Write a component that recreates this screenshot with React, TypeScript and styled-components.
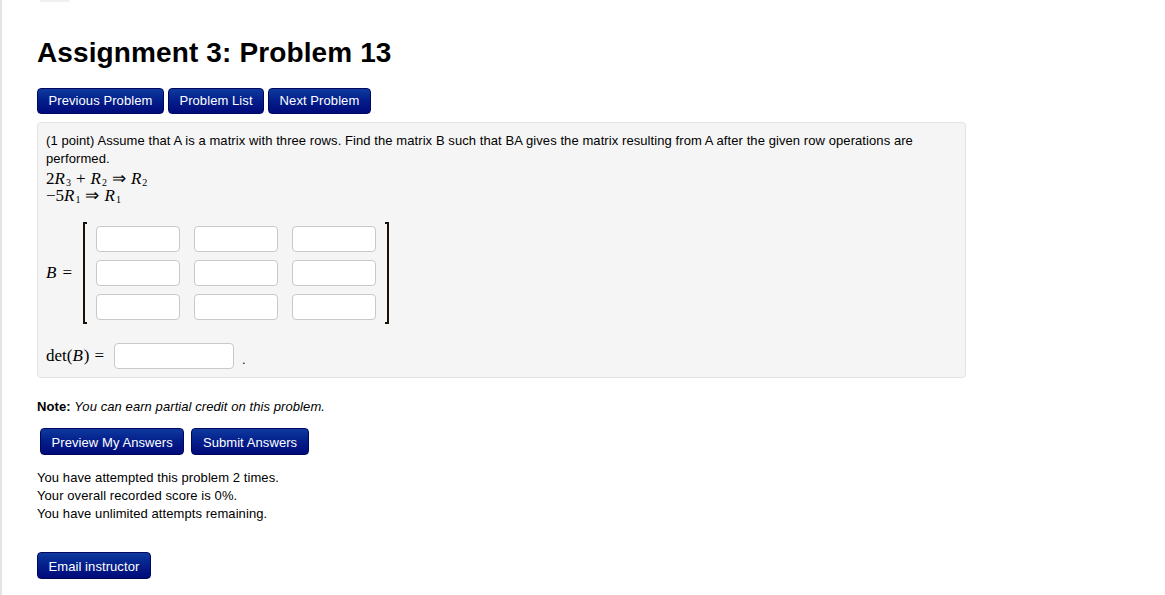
import React from "react";
import styled, { createGlobalStyle } from "styled-components";

const GlobalStyle = createGlobalStyle`
  html, body { margin: 0; padding: 0; background: #fff; }
  body {
    font-family: "Liberation Sans", Arial, Helvetica, sans-serif;
    font-size: 13px;
    line-height: 18px;
    letter-spacing: 0.08px;
    color: #000;
  }
  * { box-sizing: border-box; }
`;

const Page = styled.div`
  min-height: 595px;
  border-left: 2px solid #e4e4e4;
  padding-left: 35px;
  overflow: hidden;
`;

const TopStub = styled.div`
  width: 30px;
  height: 2px;
  margin-left: 3px;
  background: #f0f0f0;
  border-radius: 0 0 6px 6px;
`;

const Title = styled.h1`
  margin: 35px 0 20px 0;
  font-size: 28px;
  line-height: 31px;
  font-weight: bold;
  letter-spacing: 0.12px;
`;

const ButtonRow = styled.div<{ $gap: number; $indent?: number }>`
  display: flex;
  gap: ${(p) => p.$gap}px;
  padding-left: ${(p) => p.$indent ?? 0}px;
`;

const NavButton = styled.button<{ $tall?: boolean }>`
  font-family: "Liberation Sans", Arial, Helvetica, sans-serif;
  font-size: 13px;
  letter-spacing: 0.08px;
  line-height: ${(p) => (p.$tall ? 17 : 18)}px;
  color: #fff;
  padding: ${(p) => (p.$tall ? "5px 10.5px 3px" : "3px 10.5px")};
  border: 1px solid #00075e;
  border-radius: 4px;
  background: linear-gradient(to bottom, #0e3a9e 0%, #04208c 45%, #000a7a 100%);
  cursor: pointer;
  white-space: nowrap;
`;

const ProblemBox = styled.div`
  margin-top: 8px;
  width: 929px;
  padding: 9px 8px 8px;
  background: #f5f5f5;
  border: 1px solid #e3e3e3;
  border-radius: 4px;
`;

const Para = styled.div``;

const MathLine = styled.div<{ $top?: number }>`
  font-family: "Liberation Serif", "Times New Roman", serif;
  font-size: 17px;
  line-height: 17px;
  height: 17px;
  letter-spacing: 0;
  margin-top: ${(p) => p.$top ?? 0}px;
  white-space: nowrap;
`;

const Mi = styled.span`
  font-style: italic;
  padding-right: 1px;
`;

const Sub = styled.span`
  font-size: 10px;
  line-height: 10px;
  vertical-align: -2px;
  font-style: normal;
`;

const Mo = styled.span`
  padding: 0 5px;
`;

const MatrixRow = styled.div`
  display: flex;
  align-items: center;
  margin-top: 18px;
`;

const MathLabel = styled.span<{ $width: number }>`
  font-family: "Liberation Serif", "Times New Roman", serif;
  font-size: 17px;
  letter-spacing: 0;
  width: ${(p) => p.$width}px;
  white-space: nowrap;
  flex: none;
`;

const Bracket = styled.div<{ $side: "left" | "right" }>`
  width: 4px;
  height: 102px;
  flex: none;
  border-top: 2px solid #1a1208;
  border-bottom: 2px solid #1a1208;
  ${(p) => (p.$side === "left" ? "border-left" : "border-right")}: 2px solid #1a1208;
`;

const MatrixGrid = styled.div`
  display: grid;
  grid-template-columns: repeat(3, 84px);
  column-gap: 14px;
  row-gap: 8px;
  padding: 0 9px;
`;

const AnswerInput = styled.input<{ $width: number }>`
  width: ${(p) => p.$width}px;
  height: 26px;
  margin: 0;
  padding: 2px 6px;
  background: #fff;
  border: 1px solid #c9c9c9;
  border-radius: 4px;
  font-family: "Liberation Sans", Arial, sans-serif;
  font-size: 13px;
  outline: none;
`;

const DetRow = styled.div`
  display: flex;
  align-items: center;
  margin-top: 19px;
`;

const Period = styled.span`
  margin-left: 8px;
  padding-top: 8px;
  font-size: 13px;
`;

const Note = styled.div`
  margin-top: 20px;
  margin-bottom: 12px;
  em { font-style: italic; }
`;

const Attempts = styled.div`
  margin-top: 14px;
  margin-bottom: 29px;
`;

const cells = Array.from({ length: 9 }, (_, i) => i);

export default function App() {
  return (
    <>
      <GlobalStyle />
      <Page>
        <TopStub />
        <Title>Assignment 3: Problem 13</Title>
        <ButtonRow $gap={4}>
          <NavButton>Previous Problem</NavButton>
          <NavButton>Problem List</NavButton>
          <NavButton>Next Problem</NavButton>
        </ButtonRow>

        <ProblemBox>
          <Para>
            (1 point) Assume that A is a matrix with three rows. Find the matrix B such that BA gives the
            matrix resulting from A after the given row operations are performed.
          </Para>
          <MathLine $top={2}>
            2<Mi>R</Mi>
            <Sub>3</Sub>
            <Mo>+</Mo>
            <Mi>R</Mi>
            <Sub>2</Sub>
            <Mo>⇒</Mo>
            <Mi>R</Mi>
            <Sub>2</Sub>
          </MathLine>
          <MathLine>
            −5<Mi>R</Mi>
            <Sub>1</Sub>
            <Mo>⇒</Mo>
            <Mi>R</Mi>
            <Sub>1</Sub>
          </MathLine>

          <MatrixRow>
            <MathLabel $width={37}>
              <Mi>B</Mi>
              <Mo>=</Mo>
            </MathLabel>
            <Bracket $side="left" />
            <MatrixGrid>
              {cells.map((i) => (
                <AnswerInput key={i} $width={84} type="text" aria-label={`B entry ${i + 1}`} />
              ))}
            </MatrixGrid>
            <Bracket $side="right" />
          </MatrixRow>

          <DetRow>
            <MathLabel $width={68}>
              det(<Mi>B</Mi>)<Mo>=</Mo>
            </MathLabel>
            <AnswerInput $width={120} type="text" aria-label="det(B)" />
            <Period>.</Period>
          </DetRow>
        </ProblemBox>

        <Note>
          <b>Note:</b> <em>You can earn partial credit on this problem.</em>
        </Note>

        <ButtonRow $gap={7} $indent={3}>
          <NavButton $tall>Preview My Answers</NavButton>
          <NavButton $tall>Submit Answers</NavButton>
        </ButtonRow>

        <Attempts>
          You have attempted this problem 2 times.
          <br />
          Your overall recorded score is 0%.
          <br />
          You have unlimited attempts remaining.
        </Attempts>

        <NavButton $tall>Email instructor</NavButton>
      </Page>
    </>
  );
}
